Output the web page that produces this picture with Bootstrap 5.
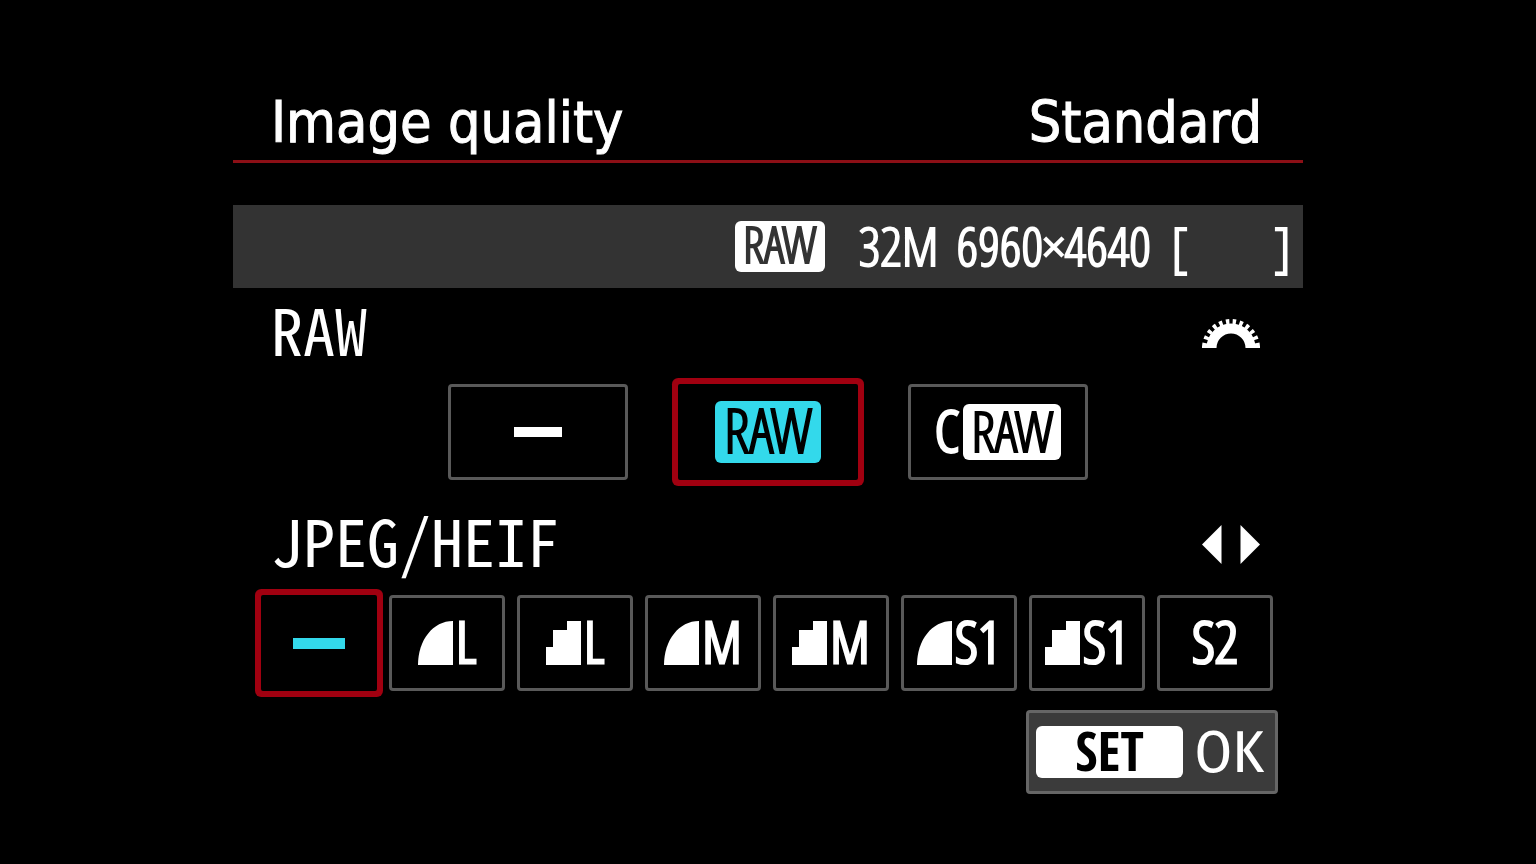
<!DOCTYPE html>
<html lang="en">
<head>
<meta charset="utf-8">
<meta name="viewport" content="width=device-width, initial-scale=1">
<title>Image quality</title>
<link rel="stylesheet" href="https://cdn.jsdelivr.net/npm/bootstrap@5.3.0/dist/css/bootstrap.min.css">
<style>
  body { background: #000; color: #fff; font-family: "DejaVu Sans Condensed", "Open Sans", sans-serif; }
  .screen { max-width: 1070px; padding-top: 84px; }
  .title-bar { padding: 0 41px 0 38px; border-bottom: 3px solid #8c0f16; }
  .title-bar h1, .title-bar span { font-size: 57px; line-height: 76px; font-weight: 400; -webkit-text-stroke: 1px currentColor; }
  .narrow { font-family: "Open Sans Condensed Light", "Open Sans Condensed", "Noto Sans", sans-serif; font-weight: 500; -webkit-text-stroke: 3px currentColor; }
  .info { min-height: 83px; margin-top: 42px; background: #333; padding-right: 12px; }
  .info .spec { font-size: 54px; line-height: 60px; padding-bottom: 4px; -webkit-text-stroke-width: 2px; }
  .info .pixels { margin: 0 20px 0 18px; }
  .info .blank { width: 86px; }
  .tag { display: inline-flex; align-items: center; justify-content: center; background: #fff; border-radius: 6px; -webkit-text-stroke-width: 2px; padding-bottom: 4px; }
  .tag-sm { width: 90px; height: 51px; font-size: 50px; color: #333; margin-right: 34px; }
  .tag-md { width: 98px; height: 56px; font-size: 56px; color: #000; margin-left: 4px; }
  .tag-lg { width: 106px; height: 62px; font-size: 60px; color: #000; background: #33d9eb; }
  .section-head { padding: 0 43px 0 38px; height: 90px; margin-bottom: 6px; }
  .section-head h2 { font-family: "Noto Sans Mono CJK SC", "Noto Sans Mono", monospace; font-size: 64px; line-height: 80px; padding-bottom: 10px; font-weight: 400; }
  .head-jpeg { margin-top: 19px; }
  .opt { height: 96px; padding: 0; border: 3px solid #595959; border-radius: 4px; background: #000; color: #fff; font-size: 58px; line-height: 90px; display: flex; align-items: center; justify-content: center; }
  .opt.chosen { border-color: #000; border-radius: 2px; box-shadow: 0 0 0 6px #a00010; }
  .opt .label-text { line-height: 84px; padding-bottom: 4px; }
  .raw-row { gap: 50px; }
  .raw-row .opt { width: 180px; }
  .jpeg-row { gap: 12px; padding: 0 30px 0 28px; }
  .jpeg-row .opt { flex: 1 1 0; gap: 3px; }
  .dash { width: 48px; height: 10px; background: #fff; }
  .chosen .dash { width: 52px; height: 11px; background: #33d9eb; }
  .ok { width: 252px; height: 84px; margin: 19px 25px 0 0; padding: 0 11px 0 7px; border: 3px solid #666; border-radius: 4px; background: #3b3b3b; color: #fff; }
  .ok .set { width: 147px; height: 52px; border-radius: 6px; background: #fff; color: #000; font: 600 54px/48px "Open Sans Condensed", "Noto Sans", sans-serif; }
  .ok .word { font: 400 60px/78px "Fira Sans Condensed", "DejaVu Sans Condensed", sans-serif; }
</style>
</head>
<body>
<svg class="d-none" aria-hidden="true">
  <symbol id="fine" viewBox="0 0 35 44"><path d="M0 44C0 19 15 0 35 0V44Z" fill="#fff"/></symbol>
  <symbol id="normal" viewBox="0 0 35 44"><path d="M0 44V26H7V9H21V0H35V44Z" fill="#fff"/></symbol>
</svg>
<main class="screen mx-auto">
  <header class="title-bar d-flex justify-content-between">
    <h1 class="m-0">Image quality</h1>
    <span>Standard</span>
  </header>

  <div class="info narrow d-flex align-items-center justify-content-end">
    <span class="tag tag-sm">RAW</span>
    <span class="spec">32M</span><span class="spec pixels">6960×4640</span><span class="spec">[</span><span class="blank"></span><span class="spec">]</span>
  </div>

  <div class="section-head d-flex align-items-center justify-content-between">
    <h2 class="m-0">RAW</h2>
    <svg width="58" height="30" viewBox="0 0 58 30" aria-label="Main dial" role="img">
      <path d="M9.500 30A19.500 19.500 0 0 1 48.500 30" fill="none" stroke="#fff" stroke-width="10"/>
      <path d="M2.500 30A26.500 26.500 0 0 1 55.500 30" fill="none" stroke="#fff" stroke-width="5" pathLength="48" stroke-dasharray="2 2" stroke-dashoffset="-1"/>
      <path d="M0 28H14V30H0ZM44 28H58V30H44Z" fill="#fff"/>
    </svg>
  </div>
  <div class="raw-row d-flex justify-content-center">
    <button class="opt" type="button" aria-label="No RAW"><span class="dash"></span></button>
    <button class="opt chosen narrow" type="button" aria-pressed="true"><span class="tag tag-lg">RAW</span></button>
    <button class="opt narrow" type="button"><span class="label-text">C</span><span class="tag tag-md">RAW</span></button>
  </div>

  <div class="section-head head-jpeg d-flex align-items-center justify-content-between">
    <h2 class="m-0">JPEG/HEIF</h2>
    <svg width="58" height="39" viewBox="0 0 58 39" aria-label="Left and right" role="img">
      <path d="M0 19.500L19.500 0V39ZM58 19.500L38.500 0V39Z" fill="#fff"/>
    </svg>
  </div>
  <div class="jpeg-row d-flex">
    <button class="opt chosen" type="button" aria-pressed="true" aria-label="No JPEG"><span class="dash"></span></button>
    <button class="opt narrow" type="button"><svg width="35" height="44"><use href="#fine"/></svg><span class="label-text">L</span></button>
    <button class="opt narrow" type="button"><svg width="35" height="44"><use href="#normal"/></svg><span class="label-text">L</span></button>
    <button class="opt narrow" type="button"><svg width="35" height="44"><use href="#fine"/></svg><span class="label-text">M</span></button>
    <button class="opt narrow" type="button"><svg width="35" height="44"><use href="#normal"/></svg><span class="label-text">M</span></button>
    <button class="opt narrow" type="button"><svg width="35" height="44"><use href="#fine"/></svg><span class="label-text">S1</span></button>
    <button class="opt narrow" type="button"><svg width="35" height="44"><use href="#normal"/></svg><span class="label-text">S1</span></button>
    <button class="opt narrow" type="button"><span class="label-text">S2</span></button>
  </div>

  <div class="d-flex justify-content-end">
    <button class="ok d-flex align-items-center justify-content-between" type="button"><span class="set">SET</span><span class="word">OK</span></button>
  </div>
</main>
<script src="https://cdn.jsdelivr.net/npm/bootstrap@5.3.0/dist/js/bootstrap.bundle.min.js"></script>
</body>
</html>
